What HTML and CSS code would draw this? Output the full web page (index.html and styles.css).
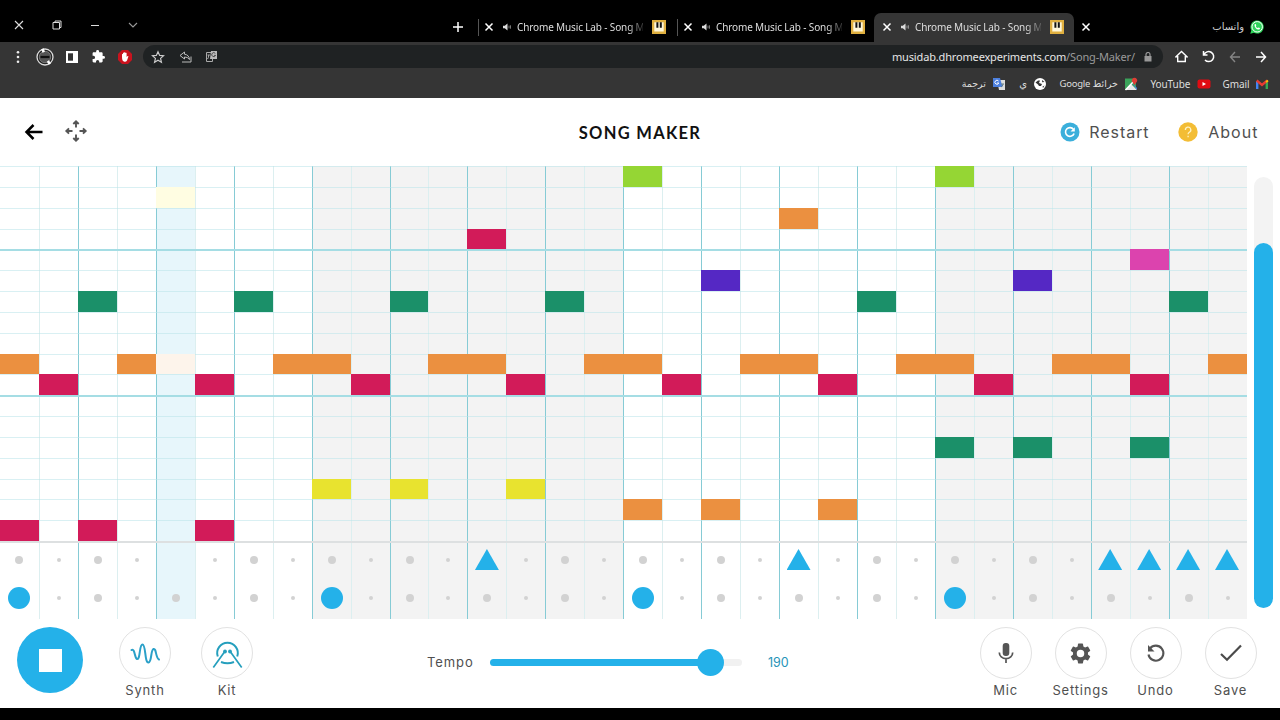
FILE: index.html
```html
<!DOCTYPE html>
<html lang="en">
<head>
<meta charset="utf-8">
<title>Chrome Music Lab - Song Maker</title>
<link rel="stylesheet" href="styles.css">
</head>
<body>
<svg class="defs" width="0" height="0">
  <symbol id="x" viewBox="0 0 10 10"><path d="M1.5 1.5l7 7m0-7l-7 7" fill="none" stroke="currentColor" stroke-width="1.5"/></symbol>
  <symbol id="speaker" viewBox="0 0 10 10"><path d="M1 3.700h1.800L5.500 1.500v7L2.800 6.300H1z" fill="currentColor"/><path d="M7 3.600v2.800M8.500 3.300v3.400" stroke="currentColor" stroke-width=".9" opacity=".6"/></symbol>
  <symbol id="piano" viewBox="0 0 14 14"><path d="M0 0h14v14H0z" fill="#e0b040"/><path d="M2.300 2.300h9.400v9.200H2.300z" fill="#fff8dc"/><path d="M4.400 2.300h2v5.500h-2zm3.400 0h2v5.500h-2z" fill="#111"/></symbol>
</svg>

<header class="browser">
  <div class="tabstrip">
    <div class="window-controls">
      <svg width="10" height="10" viewBox="0 0 10 10"><path d="M1 1l8 8m0-8L1 9" stroke="#ddd" stroke-width="1.100"/></svg>
      <svg width="10" height="10" viewBox="0 0 10 10"><path d="M1 2.500h6.500V9H1zM3 2.500V1h6v6.500H7.500" fill="none" stroke="#ddd"/></svg>
      <svg width="10" height="10" viewBox="0 0 10 10"><path d="M1 5.500h8" stroke="#ddd"/></svg>
      <svg width="10" height="10" viewBox="0 0 10 10"><path d="M1 3l4 4 4-4" fill="none" stroke="#999" stroke-width="1.100"/></svg>
    </div>
    <svg class="new-tab" width="12" height="12" viewBox="0 0 12 12"><path d="M6 1v10M1 6h10" stroke="#fff" stroke-width="1.500"/></svg>
    <div class="tab"><svg class="tab-x"><use href="#x"/></svg><svg class="tab-speaker"><use href="#speaker"/></svg><span class="tab-title">Chrome Music Lab - Song M</span><svg class="tab-icon"><use href="#piano"/></svg></div>
    <div class="tab"><svg class="tab-x"><use href="#x"/></svg><svg class="tab-speaker"><use href="#speaker"/></svg><span class="tab-title">Chrome Music Lab - Song M</span><svg class="tab-icon"><use href="#piano"/></svg></div>
    <div class="tab tab-active"><svg class="tab-x"><use href="#x"/></svg><svg class="tab-speaker"><use href="#speaker"/></svg><span class="tab-title">Chrome Music Lab - Song M</span><svg class="tab-icon"><use href="#piano"/></svg></div>
    <div class="tab-last"><svg class="tab-x"><use href="#x"/></svg>
      <span class="arabic">واتساب</span>
      <svg class="whatsapp" width="14" height="14" viewBox="0 0 14 14"><path d="M.3 13.700l1-3.500A6.600 6.600 0 1 1 3.900 12.800z" fill="#2fd35b"/><circle cx="7.200" cy="6.800" r="5.200" fill="none" stroke="#fff" stroke-width="1"/><path d="M4.600 4.400c.3-.6 1-.6 1.200-.1l.5 1.100-.5.800c.5 1 1.100 1.500 2 1.900l.8-.6 1.200.6c.5.300.1 1.400-.9 1.500C6.700 9.700 4 6.600 4.600 4.400z" fill="#fff"/></svg>
    </div>
  </div>

  <div class="toolbar">
    <div class="extensions">
      <svg class="menu" width="4" height="14" viewBox="0 0 4 14"><g fill="#eee"><circle cx="2" cy="2.200" r="1.300"/><circle cx="2" cy="7" r="1.300"/><circle cx="2" cy="11.800" r="1.300"/></g></svg>
      <svg width="18" height="18" viewBox="0 0 18 18"><circle cx="9" cy="9" r="8" fill="#222" stroke="#ddd" stroke-width="1.300"/><circle cx="9" cy="9" r="5.700" fill="#555" stroke="#777"/><path d="M4.500 9h9" stroke="#111" stroke-width="2.200"/><path d="M6.500.8l1.200 3.400M11.800 13l2.200 3" stroke="#fff" stroke-width="2.600"/></svg>
      <svg width="12" height="12" viewBox="0 0 12 12"><path d="M0 0h12v12H0z" fill="#fff"/><path d="M2 2.300h5v7.400H2z" fill="#333"/></svg>
      <svg width="13" height="13" viewBox="1 1 22 22"><path d="M20.500 11H19V7c0-1.100-.9-2-2-2h-4V3.500a2.500 2.500 0 0 0-5 0V5H4c-1.100 0-2 .9-2 2v3.800h1.500a2.700 2.700 0 0 1 0 5.400H2V20c0 1.100.9 2 2 2h3.800v-1.500a2.700 2.700 0 0 1 5.400 0V22H17c1.100 0 2-.9 2-2v-4h1.500a2.500 2.500 0 0 0 0-5z" fill="#fff"/></svg>
      <svg width="16" height="16" viewBox="0 0 16 16"><path d="M5 1h6l4 4v6l-4 4H5l-4-4V5z" fill="#c9131e"/><path d="M5 8V5.200q.7-.8 1 0V4q.7-.8 1.200 0V3.500q.7-.8 1.200 0V4q.8-.7 1.200 0v4l1-1q.9-.3.8.5L10 11.500Q9 13 7.500 12.700 5 12.500 5 8z" fill="#fff"/></svg>
    </div>
    <div class="omnibox">
      <svg width="14" height="14" viewBox="0 0 24 24"><path d="M12 3l2.800 6.200 6.700.6-5.100 4.500 1.500 6.600-5.900-3.500-5.900 3.500 1.500-6.600-5.100-4.500 6.700-.6z" fill="none" stroke="#ccc" stroke-width="2"/></svg>
      <svg width="13" height="12" viewBox="0 0 13 12"><path d="M5.500 1L1 4.500 5.500 8V6q3-.2 5 2.500Q10 3.700 5.500 3.200zM3 11h9V5.500" fill="none" stroke="#bbb"/></svg>
      <svg width="13" height="13" viewBox="0 0 13 13"><path d="M6 2.500H1.500v9h6V9" fill="none" stroke="#aaa"/><path d="M6 1h6v8H5z" fill="#bbb"/><path d="M10.300 3.400a2 2 0 1 0 .3 2H9" fill="none" stroke="#333" stroke-width=".8"/><path d="M2.500 5h2.400M3.700 5q0 3-1.200 4" stroke="#aaa" fill="none"/></svg>
      <span class="url"><b>musidab.dhromeexperiments.com</b>/Song-Maker/</span>
      <svg class="lock" width="8" height="10" viewBox="0 0 8 10"><path d="M.5 4h7v5.500h-7z" fill="#999"/><path d="M2 4V2.500a2 2 0 0 1 4 0V4" fill="none" stroke="#999" stroke-width="1.200"/></svg>
    </div>
    <div class="navigation">
      <svg width="13" height="13" viewBox="0 0 13 13"><path d="M1 6.800L6.500 1.500 12 6.800H10.300V11.500H2.700V6.800z" fill="none" stroke="#fff" stroke-width="1.400"/></svg>
      <svg width="13" height="13" viewBox="0 0 13 13"><path d="M1.500 1v4h4M2 4.800a5 5 0 1 1 1 5.200" fill="none" stroke="#fff" stroke-width="1.500"/></svg>
      <svg width="12" height="12" viewBox="0 0 12 12"><path d="M6 1L1.500 6 6 11M1.500 6H11" fill="none" stroke="#858585" stroke-width="1.400"/></svg>
      <svg width="12" height="12" viewBox="0 0 12 12"><path d="M6 1l4.500 5L6 11M10.500 6H1" fill="none" stroke="#fff" stroke-width="1.500"/></svg>
    </div>
  </div>

  <div class="bookmarks">
    <span class="arabic bm-translate">ترجمة</span>
    <svg class="bm-icon" viewBox="0 0 14 14"><path d="M5 3h8v10H7z" fill="#ddd"/><path d="M1 1h7l2.500 9H1z" fill="#4c80df"/><path d="M6.500 4a2 2 0 1 0 .3 2H5" stroke="#fff" fill="none"/><path d="M9 7h3M11 7q-.5 2.500-2 3" stroke="#607d8b" fill="none"/></svg>
    <span class="arabic bm-y">ي</span>
    <svg class="bm-icon" viewBox="0 0 14 14"><circle cx="7" cy="7" r="6" fill="#fff"/><path d="M2.500 5.500L5 3.500h2L6 6l3 1-1 2H6L5 7.500zM9 3l2.500 2-2.300.3zM9.500 9.500l2-1-1.500 2.500z" fill="#333"/></svg>
    <span class="bm-maps" dir="rtl">خرائط Google</span>
    <svg class="bm-icon" viewBox="0 0 14 14"><path d="M1 1.500h11V13H1z" fill="#3ba35a"/><path d="M1 13l6-6 6 6z" fill="#e8e8e8"/><path d="M8 6l5 5v2z" fill="#4b86e8"/><path d="M1.500 13L10 4" stroke="#fff" stroke-width="1.500"/><path d="M10.500 8L8 4.500a2.700 2.700 0 1 1 5 0z" fill="#df3d35"/></svg>
    <span class="bm-youtube">YouTube</span>
    <svg class="bm-icon" viewBox="0 0 14 14"><rect y="2.500" x=".5" width="13" height="9" rx="2" fill="#e00b12"/><path d="M5.500 5v4l3.500-2z" fill="#fff"/></svg>
    <span class="bm-gmail">Gmail</span>
    <svg class="bm-icon" viewBox="0 0 14 14"><path d="M2.200 12V4" stroke="#4285f4" stroke-width="2.400"/><path d="M11.800 12V4" stroke="#34a853" stroke-width="2.400"/><path d="M1.700 3.500L7 8l5.300-4.500" fill="none" stroke="#e53c32" stroke-width="2.300"/><path d="M11 5l2-1.500" stroke="#fbbc04" stroke-width="2"/></svg>
  </div>
</header>

<main class="app">
  <div class="app-header">
    <div class="header-tools">
      <svg width="20" height="18" viewBox="0 0 20 18"><path d="M9.500 2L2.500 9l7 7M3 9h15.500" fill="none" stroke="#000" stroke-width="2.500"/></svg>
      <svg class="move" width="24" height="24" viewBox="0 0 24 24"><path d="M12 8.500V2.500M9.300 5L12 2.300 14.700 5M12 15.500v6M9.300 19l2.700 2.700 2.700-2.700M8.500 12h-6M5 9.300L2.300 12 5 14.700M15.500 12h6M19 9.300l2.700 2.700-2.700 2.700" fill="none" stroke="#555" stroke-width="1.900"/></svg>
    </div>
    <h1>SONG MAKER</h1>
    <div class="header-links">
      <svg width="20" height="20" viewBox="0 0 20 20"><circle cx="10" cy="10" r="9.500" fill="#3bafdb"/><path d="M13.500 7.400a4.400 4.400 0 1 0 .6 4" fill="none" stroke="#fff" stroke-width="1.600"/><path d="M14.800 5.200v4.300h-4.300z" fill="#fff"/></svg>
      <span class="restart">Restart</span>
      <svg width="20" height="20" viewBox="0 0 20 20"><circle cx="10" cy="10" r="9.700" fill="#f3bd35"/><path d="M7.400 8a2.700 2.700 0 1 1 4 2.200q-1.300.7-1.300 2M10.100 13.800v1.400" fill="none" stroke="#fff3c4" stroke-width="1.300"/></svg>
      <span class="about">About</span>
    </div>
  </div>

  <div class="stage">
    <div class="board">
      <div class="melody" id="melody"></div>
      <div class="drums" id="drums"></div>
    </div>
    <div class="scroll"><div class="scroll-thumb"></div></div>
  </div>

  <footer class="controls">
    <div class="stop"><div class="stop-square"></div></div>
    <div class="control synth"><div class="ring"><svg width="32" height="28" viewBox="0 0 32 28"><path d="M2.500 11C6 9 5.500 19 8 20c3.500 1 2-14.500 5.500-14.500s2 18.500 6 18c3.500-.5 2-12.500 5-13.500s2 9 5.500 10.500" fill="none" stroke="#2aa0c8" stroke-width="2" stroke-linecap="round"/></svg></div><span>Synth</span></div>
    <div class="control kit"><div class="ring"><svg width="32" height="30" viewBox="0 0 32 30"><path d="M6.800 18.500a10.300 10.300 0 1 1 19.400 0M10 24q6.500 2.500 13 0" fill="none" stroke="#259fbd" stroke-width="2"/><path d="M2.300 29.500l11.500-16M30.700 29.500L19.200 13.500" stroke="#259fbd" stroke-width="1.700"/><circle cx="14" cy="13.500" r="1.900" fill="#259fbd"/><circle cx="19" cy="13.500" r="1.900" fill="#259fbd"/></svg></div><span>Kit</span></div>
    <div class="tempo"><span class="tempo-label">Tempo</span><div class="track"><div class="fill"></div><div class="knob"></div></div><span class="tempo-value">190</span></div>
    <div class="actions">
      <div class="control"><div class="ring"><svg width="16" height="22" viewBox="0 0 16 22"><rect x="4.700" y="1" width="6.600" height="13" rx="3" fill="#555"/><path d="M1.300 10.500a6.700 6.200 0 0 0 13.400 0M8 16.500V21" fill="none" stroke="#555" stroke-width="1.700"/></svg></div><span>Mic</span></div>
      <div class="control"><div class="ring"><svg width="25" height="25" viewBox="0 0 24 24"><path d="M19.140 12.940c.04-.3.060-.61.060-.94s-.02-.64-.07-.94l2.030-1.580a.49.490 0 0 0 .12-.61l-1.920-3.320a.49.490 0 0 0-.59-.22l-2.390.96a7 7 0 0 0-1.620-.94l-.36-2.540A.48.480 0 0 0 13.920 2.400h-3.840a.48.480 0 0 0-.48.410l-.36 2.540a7 7 0 0 0-1.620.94l-2.390-.96a.49.490 0 0 0-.59.220L2.720 8.870a.48.480 0 0 0 .12.610l2.030 1.580c-.05.300-.07.620-.07.940s.02.640.07.940l-2.030 1.580a.49.490 0 0 0-.12.610l1.920 3.320c.12.220.37.290.59.220l2.390-.96c.5.380 1.030.7 1.620.94l.36 2.540c.05.240.24.410.48.410h3.840c.24 0 .44-.17.480-.41l.36-2.540a7 7 0 0 0 1.620-.94l2.390.96c.22.070.47 0 .59-.22l1.920-3.320a.48.480 0 0 0-.12-.61zM12 15.600a3.600 3.600 0 1 1 0-7.200 3.600 3.600 0 0 1 0 7.200z" fill="#555"/></svg></div><span>Settings</span></div>
      <div class="control"><div class="ring"><svg width="20" height="20" viewBox="0 0 20 20"><path d="M4 5.500a7.500 7.500 0 1 1-1.500 6" fill="none" stroke="#555" stroke-width="2.100"/><path d="M2 2v6.500h6.500z" fill="#555"/></svg></div><span>Undo</span></div>
      <div class="control"><div class="ring"><svg width="24" height="20" viewBox="0 0 24 20"><path d="M2 11l6 5.700L22 2.500" fill="none" stroke="#4b4b4b" stroke-width="2.200"/></svg></div><span>Save</span></div>
    </div>
  </footer>
</main>
<script src="grid.js"></script>
</body>
</html>
```

FILE: styles.css
```css
* { box-sizing: border-box; }
body { margin: 0; width: 1280px; height: 720px; overflow: hidden; background: #000; font-family: Inter, "Liberation Sans", sans-serif; color: #505050; }
svg { display: block; flex: none; }
.defs { position: absolute; }

.browser { height: 98px; background: #353535; color: #dedede; font: 11px/14px "Noto Sans", "DejaVu Sans", sans-serif; }
.arabic { font-family: "DejaVu Sans", sans-serif; direction: rtl; text-align: right; white-space: nowrap; }
.tabstrip { height: 42px; padding-top: 13px; background: #000; display: flex; }
.window-controls { width: 452px; padding: 7px 0 0 14px; display: flex; gap: 28px; }
.new-tab { margin: 8px 14px 0 0; }
.tab { width: 199px; height: 29px; padding: 0 0 1px 6px; display: flex; align-items: center; position: relative; }
.tab:not(.tab-active)::before { content: ""; position: absolute; left: 0; top: 6px; width: 1px; height: 17px; background: #555; }
.tab-active { background: #353535; border-radius: 7px 7px 0 0; margin-left: -2px; padding-left: 8px; width: 200px; }
.tab-x { width: 10px; height: 10px; color: #fff; }
.tab-speaker { width: 10px; height: 10px; margin-left: 8px; color: #ddd; }
.tab-title { width: 126px; margin-left: 5px; font-size: 10px; letter-spacing: -0.140px; white-space: nowrap; -webkit-mask-image: linear-gradient(90deg, #000 88%, #0004 99%); mask-image: linear-gradient(90deg, #000 88%, #0004 99%); }
.tab-icon { width: 14px; height: 14px; margin-left: 9px; }
.tab-last { flex: 1; height: 29px; display: flex; align-items: center; padding: 0 0 1px 7px; }
.tab-last .arabic { width: 38px; margin-left: 115px; font-size: 10px; color: #ccc; }
.whatsapp { margin-left: 6px; }

.toolbar { height: 30px; padding-top: 3px; display: flex; }
.extensions { width: 143px; height: 23px; padding-left: 16px; display: flex; align-items: center; }
.extensions svg + svg { margin-left: 12px; }
.extensions svg:nth-child(2) { margin-left: 16px; }
.extensions svg:nth-child(4) { margin-left: 14px; }
.omnibox { width: 1020px; height: 23px; border-radius: 12px; background: #1f2223; display: flex; align-items: center; padding-left: 8px; }
.omnibox svg + svg { margin-left: 13.500px; }
.url { width: 243px; margin-left: 674px; font-size: 11px; line-height: 20px; color: #9a9a9a; white-space: nowrap; letter-spacing: -0.160px; }
.url b { font-weight: 400; color: #e6e6e6; }
.omnibox .lock { margin-left: 9px; }
.navigation { height: 23px; padding-left: 12px; display: flex; align-items: center; gap: 14px; }
.bookmarks { height: 24px; display: flex; align-items: center; padding-left: 962px; font-size: 10px; white-space: nowrap; }
.bookmarks span { flex: none; }
.bm-translate { width: 24px; font-size: 9.500px; }
.bm-y { width: 8px; margin-left: 13px; }
.bm-maps { width: 58px; margin-left: 13px; font-size: 9.500px; letter-spacing: -0.250px; }
.bm-youtube { width: 40px; margin-left: 12.500px; letter-spacing: -0.100px; }
.bm-gmail { width: 26px; margin-left: 12px; letter-spacing: -0.100px; }
.bm-icon { width: 14px; height: 14px; margin-left: 6px; }

.app { height: 610px; background: #fff; }
.app-header { height: 68px; display: grid; grid-template-columns: 1fr auto 1fr; align-items: center; }
.header-tools { display: flex; align-items: center; gap: 20px; padding-left: 23.500px; }
.move { margin-top: -2px; }
h1 { margin: 0; color: #111; font: 700 16.500px/24px Lato, sans-serif; letter-spacing: 1.300px; padding-top: 1px; }
.header-links { display: flex; align-items: center; padding-left: 359px; font-size: 16px; margin-top: -1px; }
.restart { width: 62px; margin: 0 27px 0 9px; letter-spacing: 0.950px; }
.about { margin-left: 10px; letter-spacing: 1px; }

.stage { height: 452px; display: flex; }
.board { width: 1246.500px; flex: none; }
.melody { height: 375px; display: grid; grid-template: repeat(18, 1fr) / repeat(32, 1fr); }
.column { grid-row: 1 / -1; border-left: 1px solid #dceff0; }
.column.beat { border-left-color: #86cbd5; }
.column:first-child { border-left: 0; }
.column.shade { background: #f3f3f3; }
.column.playing { background: #e7f6fb; }
.line { grid-column: 1 / -1; border-top: 1px solid #b9e3e98c; }
.line.octave { border-top: 2px solid #a5dde4; }
.lime { background: #95d634; }
.orange { background: #eb9040; }
.crimson { background: #d21b59; }
.pink { background: #dc43ae; }
.purple { background: #5528c4; }
.green { background: #1b9069; }
.yellow { background: #e8e32f; }
.pale-yellow { background: #fffde2; }
.pale-orange { background: #fdf4eb; }
.drums { height: 77px; display: grid; grid-template-columns: repeat(32, 1fr); border-top: 2px solid #dde0e1; }
.drums .column { display: grid; grid-template-rows: 34px 42px; grid-row: 1; place-items: center; }
.dot { width: 4px; height: 4px; border-radius: 50%; background: #d2d2d2; }
.beat .dot { width: 8px; height: 8px; }
.dot.hidden { visibility: hidden; }
.circle { width: 22px; height: 22px; border-radius: 50%; background: #24b1e9; }
.triangle { width: 24px; height: 21px; margin: -1px 0 0 -1px; background: #24b1e9; clip-path: polygon(50% 0, 100% 100%, 0 100%); }
.scroll { width: 19px; height: 431px; margin: 11px 0 0 7.500px; border-radius: 10px; background: #f3f3f3; padding-top: 66px; }
.scroll-thumb { height: 365px; border-radius: 10px; background: #24b1e9; }

.controls { height: 90px; display: flex; align-items: flex-start; padding: 9px 0 0 17px; }
.stop { width: 66px; height: 66px; border-radius: 50%; background: #24b1e9; display: grid; place-items: center; }
.stop-square { width: 23px; height: 23px; background: #fff; }
.control { width: 75px; display: flex; flex-direction: column; align-items: center; gap: 3px; font-size: 13px; line-height: 16px; letter-spacing: 0.800px; }
.control.synth { margin-left: 24.500px; }
.control.kit { margin-left: 7px; }
.ring { width: 52px; height: 52px; border: 1px solid #e2e2e2; border-radius: 50%; display: grid; place-items: center; }
.tempo { height: 20px; margin: 25px 0 0 162.500px; display: flex; align-items: center; font-size: 13px; letter-spacing: 0.900px; }
.tempo-label { width: 63px; margin-top: -1px; }
.track { width: 252px; height: 7px; border-radius: 4px; background: #f1f1f1; position: relative; }
.fill { width: 220px; height: 7px; border-radius: 4px; background: #24b1e9; }
.knob { position: absolute; left: 207px; top: -10px; width: 27px; height: 27px; border-radius: 50%; background: #24b1e9; }
.tempo-value { width: 30px; margin-left: 26px; font-size: 12.500px; letter-spacing: 0; color: #2694b8; }
.actions { margin-left: 170px; display: flex; }
```

FILE: grid.js
```js
const COLUMNS = 32;
const ROWS = 18;

// Each entry: row, colour class, columns holding a note.
const notes = [
  [0, "lime", [16, 24]],
  [1, "pale-yellow", [4]],
  [2, "orange", [20]],
  [3, "crimson", [12]],
  [4, "pink", [29]],
  [5, "purple", [18, 26]],
  [6, "green", [2, 6, 10, 14, 22, 30]],
  [9, "orange", [0, 3, 7, 8, 11, 12, 15, 16, 19, 20, 23, 24, 27, 28, 31]],
  [9, "pale-orange", [4]],
  [10, "crimson", [1, 5, 9, 13, 17, 21, 25, 29]],
  [13, "green", [24, 26, 29]],
  [15, "yellow", [8, 10, 13]],
  [16, "orange", [16, 18, 21]],
  [17, "crimson", [0, 2, 5]],
];
const triangles = [12, 20, 28, 29, 30, 31];
const circles = [0, 8, 16, 24];

const melody = document.getElementById("melody");
const drums = document.getElementById("drums");

function add(parent, className, column, row) {
  const el = document.createElement("div");
  el.className = className;
  if (column !== undefined) el.style.gridColumn = column + 1;
  if (row !== undefined) el.style.gridRow = row + 1;
  parent.append(el);
  return el;
}

for (let c = 0; c < COLUMNS; c++) {
  let name = "column";
  if (c % 2 === 0) name += " beat";
  if (Math.floor(c / 8) % 2) name += " shade";
  if (c === 4) name += " playing";
  add(melody, name, c);
  const column = add(drums, name, c);
  add(column, triangles.includes(c) ? "triangle" : c === 4 ? "dot hidden" : "dot");
  add(column, circles.includes(c) ? "circle" : "dot");
}
for (let r = 0; r < ROWS; r++) {
  add(melody, r === 4 || r === 11 ? "line octave" : "line", undefined, r);
}
for (const [row, color, columns] of notes) {
  for (const c of columns) add(melody, color, c, row);
}
```
